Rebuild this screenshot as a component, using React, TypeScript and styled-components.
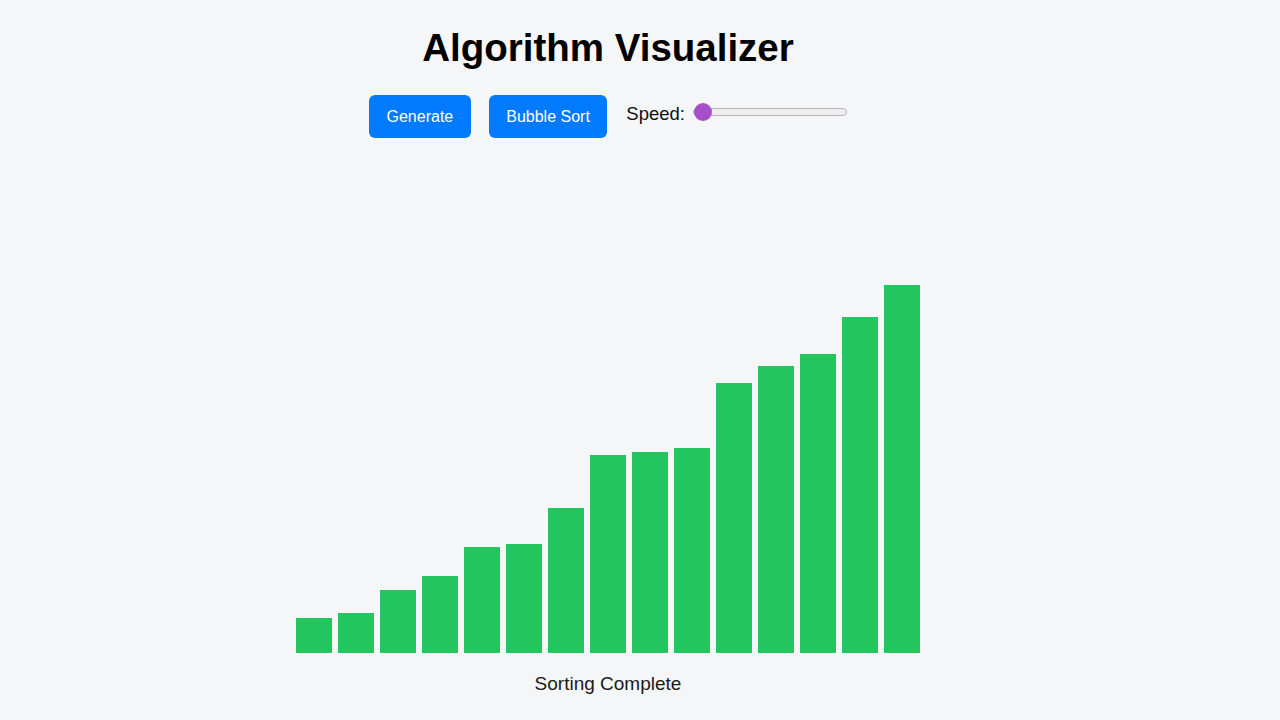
import styled, { createGlobalStyle } from 'styled-components'

const heights = [35, 40, 63, 77, 106, 109, 145, 198, 201, 205, 270, 287, 299, 336, 368]

const GlobalStyle = createGlobalStyle`
    html, body {
        margin: 0;
        padding: 0;
        background: #f4f6f8;
        font-family: "Liberation Sans", Arial, sans-serif;
    }
`

const Page = styled.div`
    width: 1216px;
    height: 720px;
    display: flex;
    flex-direction: column;
    align-items: center;
`

const Title = styled.h1`
    margin: 26px 0 0;
    font-size: 38.5px;
    line-height: 44px;
    font-weight: bold;
    color: #000;
`

const Controls = styled.div`
    display: flex;
    align-items: center;
    gap: 18px;
    margin-top: 25px;
`

const Button = styled.button`
    height: 43px;
    padding: 0 17.5px;
    border: none;
    border-radius: 6px;
    background: #007bff;
    color: #fff;
    font-family: "Liberation Sans", Arial, sans-serif;
    font-size: 16px;
    cursor: pointer;
`

const SpeedLabel = styled.label`
    display: flex;
    align-items: center;
    gap: 8px;
    font-size: 18.5px;
    color: #111;
    margin-left: 1px;
    margin-top: -5px;
`

const Slider = styled.input`
    -webkit-appearance: none;
    appearance: none;
    width: 154px;
    height: 18px;
    margin: 0 0 4px;
    background: transparent;

    &::-webkit-slider-runnable-track {
        height: 8px;
        border-radius: 5px;
        background: #efefef;
        border: 1px solid #b5b5b5;
        box-sizing: border-box;
    }

    &::-webkit-slider-thumb {
        -webkit-appearance: none;
        width: 18px;
        height: 18px;
        margin-top: -6px;
        border-radius: 50%;
        background: #a74fc8;
        border: none;
    }
`

const Bars = styled.div`
    display: flex;
    align-items: flex-end;
    gap: 6px;
    height: 420px;
    margin-top: 95px;
`

const Bar = styled.div<{ $h: number }>`
    width: 36px;
    height: ${p => p.$h}px;
    background: #22c55e;
`

const Status = styled.p`
    margin: 20px 0 0;
    font-size: 19px;
    line-height: 22px;
    color: #1a1a1a;
`

export default function App() {
    return <>
        <GlobalStyle />
        <Page>
            <Title>Algorithm Visualizer</Title>
            <Controls>
                <Button>Generate</Button>
                <Button>Bubble Sort</Button>
                <SpeedLabel>
                    Speed:
                    <Slider type="range" min={1} max={100} defaultValue={1} />
                </SpeedLabel>
            </Controls>
            <Bars>
                {heights.map((h, i) => <Bar key={i} $h={h} />)}
            </Bars>
            <Status>Sorting Complete</Status>
        </Page>
    </>
}
